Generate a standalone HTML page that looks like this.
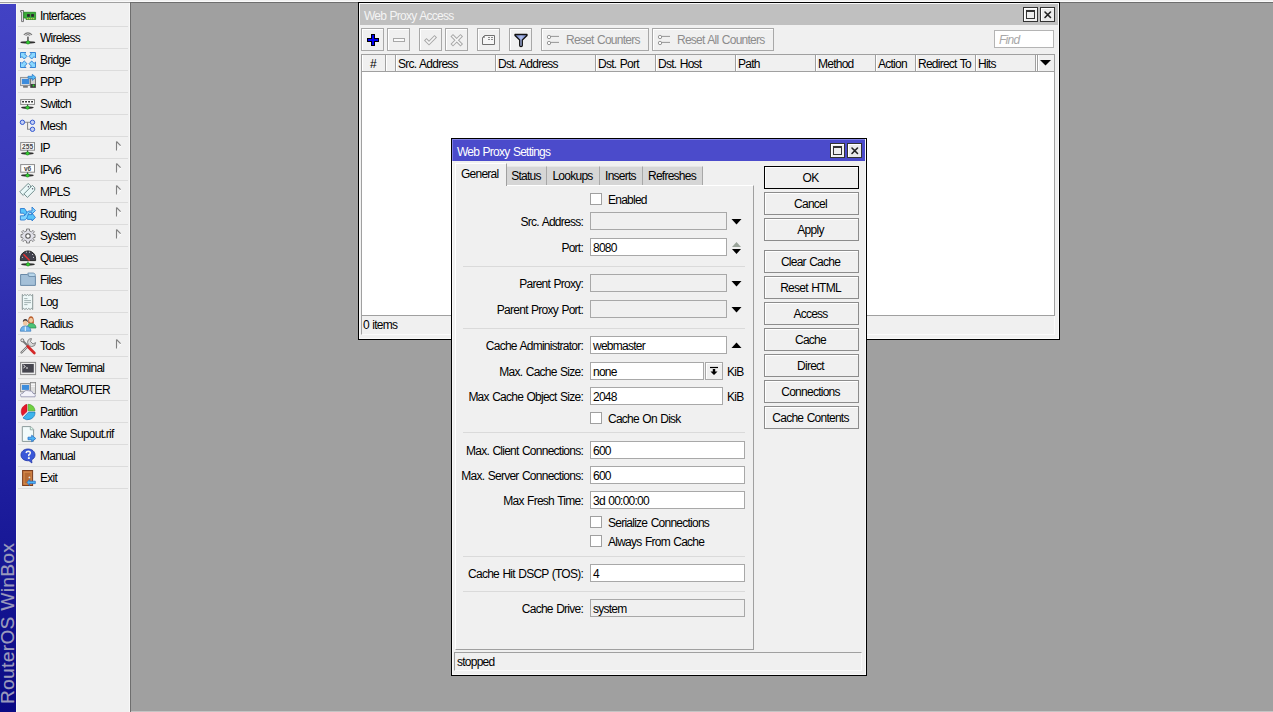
<!DOCTYPE html><html><head><meta charset="utf-8"><style>
*{margin:0;padding:0;box-sizing:border-box}
html,body{width:1273px;height:712px;overflow:hidden;background:#a0a0a0;position:relative;font-family:"Liberation Sans",sans-serif;font-size:12px;letter-spacing:-0.75px;word-spacing:0.8px;color:#000}
.b{position:absolute}
.t{position:absolute;white-space:nowrap;line-height:14px;height:14px}
.c{position:absolute;text-align:center;white-space:nowrap;line-height:14px;height:14px}
svg{position:absolute;overflow:visible}
</style></head><body><div class="b" style="left:0px;top:0px;width:1273px;height:2px;background:#f0f0f0"></div>
<div class="b" style="left:0px;top:1px;width:1273px;height:1px;background:#fafafa"></div>
<div class="b" style="left:0px;top:2px;width:130px;height:1px;background:#a0a0a0"></div>
<div class="b" style="left:130px;top:2px;width:1143px;height:1px;background:#6e6e6e"></div>
<div class="b" style="left:130px;top:2px;width:1px;height:710px;background:#6e6e6e"></div>
<div class="b" style="left:131px;top:711px;width:1142px;height:1px;background:#c4c4c4"></div>
<div class="b" style="left:0px;top:3px;width:130px;height:709px;background:#f0f0f0"></div>
<div class="b" style="left:129px;top:3px;width:1px;height:709px;background:#f8f8f8"></div>
<div class="b" style="left:0px;top:4px;width:16px;height:708px;background:linear-gradient(#4242c4,#3434b4 35%,#1c1c9c 70%,#0a0a84)"></div>
<div class="b" style="left:16px;top:4px;width:1px;height:708px;background:#f8f8f8"></div>
<div class="t" style="left:40px;top:9px;">Interfaces</div>
<div class="b" style="left:18px;top:26px;width:110px;height:1px;background:#dcdcdc"></div>
<div class="t" style="left:40px;top:31px;">Wireless</div>
<div class="b" style="left:18px;top:48px;width:110px;height:1px;background:#dcdcdc"></div>
<div class="t" style="left:40px;top:53px;">Bridge</div>
<div class="b" style="left:18px;top:70px;width:110px;height:1px;background:#dcdcdc"></div>
<div class="t" style="left:40px;top:75px;">PPP</div>
<div class="b" style="left:18px;top:92px;width:110px;height:1px;background:#dcdcdc"></div>
<div class="t" style="left:40px;top:97px;">Switch</div>
<div class="b" style="left:18px;top:114px;width:110px;height:1px;background:#dcdcdc"></div>
<div class="t" style="left:40px;top:119px;">Mesh</div>
<div class="b" style="left:18px;top:136px;width:110px;height:1px;background:#dcdcdc"></div>
<div class="t" style="left:40px;top:141px;">IP</div>
<div class="b" style="left:18px;top:158px;width:110px;height:1px;background:#dcdcdc"></div>
<svg style="left:116px;top:141px" width="7" height="11"><path d="M1 9.5 L5 5" fill="none" stroke="#ffffff" stroke-width="1"/><path d="M0.5 0.5 V9.5 M0.5 0.5 L4.6 4.6" fill="none" stroke="#808080" stroke-width="1.1"/></svg>
<div class="t" style="left:40px;top:163px;">IPv6</div>
<div class="b" style="left:18px;top:180px;width:110px;height:1px;background:#dcdcdc"></div>
<svg style="left:116px;top:163px" width="7" height="11"><path d="M1 9.5 L5 5" fill="none" stroke="#ffffff" stroke-width="1"/><path d="M0.5 0.5 V9.5 M0.5 0.5 L4.6 4.6" fill="none" stroke="#808080" stroke-width="1.1"/></svg>
<div class="t" style="left:40px;top:185px;">MPLS</div>
<div class="b" style="left:18px;top:202px;width:110px;height:1px;background:#dcdcdc"></div>
<svg style="left:116px;top:185px" width="7" height="11"><path d="M1 9.5 L5 5" fill="none" stroke="#ffffff" stroke-width="1"/><path d="M0.5 0.5 V9.5 M0.5 0.5 L4.6 4.6" fill="none" stroke="#808080" stroke-width="1.1"/></svg>
<div class="t" style="left:40px;top:207px;">Routing</div>
<div class="b" style="left:18px;top:224px;width:110px;height:1px;background:#dcdcdc"></div>
<svg style="left:116px;top:207px" width="7" height="11"><path d="M1 9.5 L5 5" fill="none" stroke="#ffffff" stroke-width="1"/><path d="M0.5 0.5 V9.5 M0.5 0.5 L4.6 4.6" fill="none" stroke="#808080" stroke-width="1.1"/></svg>
<div class="t" style="left:40px;top:229px;">System</div>
<div class="b" style="left:18px;top:246px;width:110px;height:1px;background:#dcdcdc"></div>
<svg style="left:116px;top:229px" width="7" height="11"><path d="M1 9.5 L5 5" fill="none" stroke="#ffffff" stroke-width="1"/><path d="M0.5 0.5 V9.5 M0.5 0.5 L4.6 4.6" fill="none" stroke="#808080" stroke-width="1.1"/></svg>
<div class="t" style="left:40px;top:251px;">Queues</div>
<div class="b" style="left:18px;top:268px;width:110px;height:1px;background:#dcdcdc"></div>
<div class="t" style="left:40px;top:273px;">Files</div>
<div class="b" style="left:18px;top:290px;width:110px;height:1px;background:#dcdcdc"></div>
<div class="t" style="left:40px;top:295px;">Log</div>
<div class="b" style="left:18px;top:312px;width:110px;height:1px;background:#dcdcdc"></div>
<div class="t" style="left:40px;top:317px;">Radius</div>
<div class="b" style="left:18px;top:334px;width:110px;height:1px;background:#dcdcdc"></div>
<div class="t" style="left:40px;top:339px;">Tools</div>
<div class="b" style="left:18px;top:356px;width:110px;height:1px;background:#dcdcdc"></div>
<svg style="left:116px;top:339px" width="7" height="11"><path d="M1 9.5 L5 5" fill="none" stroke="#ffffff" stroke-width="1"/><path d="M0.5 0.5 V9.5 M0.5 0.5 L4.6 4.6" fill="none" stroke="#808080" stroke-width="1.1"/></svg>
<div class="t" style="left:40px;top:361px;">New Terminal</div>
<div class="b" style="left:18px;top:378px;width:110px;height:1px;background:#dcdcdc"></div>
<div class="t" style="left:40px;top:383px;">MetaROUTER</div>
<div class="b" style="left:18px;top:400px;width:110px;height:1px;background:#dcdcdc"></div>
<div class="t" style="left:40px;top:405px;">Partition</div>
<div class="b" style="left:18px;top:422px;width:110px;height:1px;background:#dcdcdc"></div>
<div class="t" style="left:40px;top:427px;">Make Supout.rif</div>
<div class="b" style="left:18px;top:444px;width:110px;height:1px;background:#dcdcdc"></div>
<div class="t" style="left:40px;top:449px;">Manual</div>
<div class="b" style="left:18px;top:466px;width:110px;height:1px;background:#dcdcdc"></div>
<div class="t" style="left:40px;top:471px;">Exit</div>
<div class="b" style="left:18px;top:488px;width:110px;height:1px;background:#dcdcdc"></div>
<div class="b" style="left:-1.5px;top:703.5px;width:170px;height:17px;transform-origin:0 0;transform:rotate(-90deg);font-size:19px;letter-spacing:0.4px;word-spacing:0;line-height:17px;color:#9a9abc;text-shadow:0.4px 0 0 rgba(154,154,188,0.5);white-space:nowrap">RouterOS WinBox</div>
<svg style="left:20px;top:8px" width="16" height="16" viewBox="0 0 16 16"><path d="M0.6 2.5 H3.5 V13.6 H1.6 V4 H0.6 Z" fill="#e4e4ee" stroke="#6a6a6a" stroke-width="0.9"/><path d="M3.8 4.3 H15.6 V11.5 H6 V10 H3.8 Z" fill="#3cac3c" stroke="#218a21" stroke-width="0.8"/><rect x="7.1" y="6.1" width="2.7" height="2.7" fill="#2a2030"/><rect x="11.2" y="6.1" width="2.7" height="2.7" fill="#2a2030"/><path d="M6.8 10.6 H15" stroke="#e8c860" stroke-width="1.1" stroke-dasharray="1 1"/></svg>
<svg style="left:20px;top:30px" width="16" height="16" viewBox="0 0 16 16"><path d="M3.8 4.8 Q7.9 0.8 12 4.8" fill="none" stroke="#777" stroke-width="1.1"/><path d="M5.6 5.4 Q7.9 3.6 10.2 5.4" fill="none" stroke="#666" stroke-width="0.9"/><rect x="7.2" y="6.6" width="1.5" height="5" fill="#555"/><ellipse cx="7.8500000000000005" cy="12.4" rx="7.45" ry="1.1" fill="#1a1a1a" opacity="0.9"/><circle cx="8" cy="12.4" r="1.7" fill="#33cc33" stroke="#1a8a1a" stroke-width="0.6"/></svg>
<svg style="left:20px;top:52px" width="16" height="16" viewBox="0 0 16 16"><g><path d="M0.5 0.5 H6 L4.6 1.9 L7 4.3 L4.3 7 L1.9 4.6 L0.5 6 Z" fill="#8ad8ff" stroke="#2a7ad0" stroke-width="0.9"/></g><g transform="translate(16 0) scale(-1 1)"><path d="M0.5 0.5 H6 L4.6 1.9 L7 4.3 L4.3 7 L1.9 4.6 L0.5 6 Z" fill="#8ad8ff" stroke="#2a7ad0" stroke-width="0.9"/></g><g transform="translate(0 16) scale(1 -1)"><path d="M0.5 0.5 H6 L4.6 1.9 L7 4.3 L4.3 7 L1.9 4.6 L0.5 6 Z" fill="#8ad8ff" stroke="#2a7ad0" stroke-width="0.9"/></g><g transform="translate(16 16) scale(-1 -1)"><path d="M0.5 0.5 H6 L4.6 1.9 L7 4.3 L4.3 7 L1.9 4.6 L0.5 6 Z" fill="#8ad8ff" stroke="#2a7ad0" stroke-width="0.9"/></g></svg>
<svg style="left:20px;top:74px" width="16" height="16" viewBox="0 0 16 16"><rect x="0.6" y="3.4" width="9.4" height="8.2" fill="#e0e0e0" stroke="#8a8a8a" stroke-width="0.9"/><rect x="1.9" y="4.9" width="7.3" height="5.2" fill="#3c8cdc"/><rect x="3.1" y="11.8" width="4.7" height="1.9" fill="#777"/><rect x="10.6" y="4.7" width="5" height="8.8" fill="#d0d0d0" stroke="#666" stroke-width="0.8"/><rect x="10.6" y="10" width="5" height="3.6" fill="#404040"/><circle cx="13.5" cy="11.5" r="0.9" fill="#2d2"/><path d="M8 2.3 H12.3 V0.3 L15.8 3.3 L12.3 6.3 V4.3 H8 Z" fill="#5ac0f8" stroke="#2a78c8" stroke-width="0.8"/></svg>
<svg style="left:20px;top:96px" width="16" height="16" viewBox="0 0 16 16"><rect x="0.7" y="3.6" width="13.8" height="4.8" fill="#fff" stroke="#8a8a8a" stroke-width="1"/><path d="M2.1 5.7 H13.5" stroke="#333" stroke-width="1.4" stroke-dasharray="1.9 1.1"/><rect x="7.1" y="8.5" width="1" height="2" fill="#333"/><ellipse cx="7.3999999999999995" cy="11.6" rx="6.3" ry="1.1" fill="#1a1a1a" opacity="0.9"/><circle cx="7.55" cy="11.6" r="1.7" fill="#33cc33" stroke="#1a8a1a" stroke-width="0.6"/></svg>
<svg style="left:20px;top:118px" width="16" height="16" viewBox="0 0 16 16"><path d="M4.5 4.3 H10.5 M7.55 4.3 V11.3 H10.5" fill="none" stroke="#8a8a8a" stroke-width="1.1"/><circle cx="2.4" cy="4.3" r="2.2" fill="#c4d0f4" stroke="#3358d0" stroke-width="1"/><circle cx="12.5" cy="4.3" r="2.2" fill="#c4d0f4" stroke="#3358d0" stroke-width="1"/><circle cx="12.5" cy="11.3" r="2.2" fill="#c4d0f4" stroke="#3358d0" stroke-width="1"/></svg>
<svg style="left:20px;top:140px" width="16" height="16" viewBox="0 0 16 16"><rect x="0.7" y="2.6" width="13.8" height="7.6" fill="#fff" stroke="#8a8a8a" stroke-width="1"/><text x="7.6" y="8.8" font-family="Liberation Sans" font-size="6.6" font-weight="bold" text-anchor="middle" fill="#4a4a4a" letter-spacing="0">255</text><rect x="7.1" y="10.4" width="1" height="2" fill="#333"/><ellipse cx="7.3999999999999995" cy="13.4" rx="6.3" ry="1.1" fill="#1a1a1a" opacity="0.9"/><circle cx="7.55" cy="13.4" r="1.7" fill="#33cc33" stroke="#1a8a1a" stroke-width="0.6"/></svg>
<svg style="left:20px;top:162px" width="16" height="16" viewBox="0 0 16 16"><rect x="0.7" y="2.6" width="13.8" height="7.6" fill="#fff" stroke="#8a8a8a" stroke-width="1"/><text x="7.6" y="8.8" font-family="Liberation Sans" font-size="6.6" font-weight="bold" text-anchor="middle" fill="#4a4a4a" letter-spacing="0">v6</text><rect x="7.1" y="10.4" width="1" height="2" fill="#333"/><ellipse cx="7.3999999999999995" cy="13.4" rx="6.3" ry="1.1" fill="#1a1a1a" opacity="0.9"/><circle cx="7.55" cy="13.4" r="1.7" fill="#33cc33" stroke="#1a8a1a" stroke-width="0.6"/></svg>
<svg style="left:20px;top:184px" width="16" height="16" viewBox="0 0 16 16"><g transform="translate(8.2 -0.6) rotate(45)"><path d="M0 0 H3.4 L5 1.8 V12 H0 Z" fill="#eaf8f8" stroke="#6f8a8a" stroke-width="0.9"/><circle cx="2.4" cy="2.2" r="0.7" fill="#556"/></g><g transform="translate(12.4 1.4) rotate(45)"><path d="M0 0 H3.4 L5 1.8 V12 H0 Z" fill="#eaf8f8" stroke="#6f8a8a" stroke-width="0.9"/><circle cx="2.4" cy="2.2" r="0.7" fill="#556"/></g></svg>
<svg style="left:20px;top:206px" width="16" height="16" viewBox="0 0 16 16"><path d="M0.4 2.5 H4.5 L8.5 8.6 H12 V7 L15.4 11.5 L12 15 V13.4 H7.5 L3.5 7.2 H0.4 Z" fill="#58c4fa" stroke="#2a7ad0" stroke-width="0.9"/><path d="M0.4 9.8 H4 C6 9.8 6.5 5 9 5 H12 V1 L15.4 4.5 L12 8 V6.7 H9.5 C8 6.7 7.6 14 4.2 14 H0.4 Z" fill="#80d4ff" stroke="#2a7ad0" stroke-width="0.9"/></svg>
<svg style="left:20px;top:228px" width="16" height="16" viewBox="0 0 16 16"><g transform="translate(8 8)"><path d="M-1.5 -7 H1.5 V-5 L3.5 -4.2 L5 -5.6 L6.4 -4.2 L5 -2.6 L5.6 -1.5 H7 V1.5 H5.6 L5 2.6 L6.4 4.2 L5 5.6 L3.5 4.2 L1.5 5 V7 H-1.5 V5 L-3.5 4.2 L-5 5.6 L-6.4 4.2 L-5 2.6 L-5.6 1.5 H-7 V-1.5 H-5.6 L-5 -2.6 L-6.4 -4.2 L-5 -5.6 L-3.5 -4.2 L-1.5 -5 Z" fill="#e0e0e8" stroke="#777" stroke-width="0.9"/><circle r="2.2" fill="#fff" stroke="#555" stroke-width="1.1"/></g></svg>
<svg style="left:20px;top:250px" width="16" height="16" viewBox="0 0 16 16"><path d="M0.4 10.6 V8.5 A7.5 7.5 0 0 1 15.6 8.5 V10.6 Z" fill="#40404c" stroke="#1c1c1c" stroke-width="0.9"/><g fill="#cfcfd8"><rect x="5.9" y="1.7" width="1" height="1"/><rect x="9" y="1.7" width="1" height="1"/><rect x="12.1" y="4" width="1" height="1"/><rect x="13" y="6.9" width="1" height="1"/><rect x="1.9" y="6.9" width="1" height="1"/></g><path d="M3.5 4.3 L9.6 10.6" stroke="#e83030" stroke-width="1.5"/><rect x="7.3" y="10.8" width="1.3" height="2.4" fill="#999"/><ellipse cx="8.0" cy="14.4" rx="6.800000000000001" ry="1.1" fill="#1a1a1a" opacity="0.9"/><circle cx="8" cy="14.4" r="1.7" fill="#33cc33" stroke="#1a8a1a" stroke-width="0.6"/></svg>
<svg style="left:20px;top:272px" width="16" height="16" viewBox="0 0 16 16"><path d="M0.6 2.5 H7.6 L8.8 4.3 H15.4 V13.4 H0.6 Z" fill="#a4c0d8" stroke="#6a8aa8" stroke-width="1"/><path d="M7.8 1 H13.8 L15.2 2.4 V4.5 H9 Z" fill="#b8d6ea" stroke="#6a8aa8" stroke-width="0.8"/></svg>
<svg style="left:20px;top:294px" width="16" height="16" viewBox="0 0 16 16"><path d="M2.3 0.5 L3.6 1.6 L4.9 0.5 L6.2 1.6 L7.5 0.5 L8.8 1.6 L10.1 0.5 L11.4 1.6 L12.7 0.5 V15.5 L11.4 14.4 L10.1 15.5 L8.8 14.4 L7.5 15.5 L6.2 14.4 L4.9 15.5 L3.6 14.4 L2.3 15.5 Z" fill="#eef8f8" stroke="#7a8a8a" stroke-width="0.9"/><path d="M4.2 4.6 H7.5 M4.2 6.6 H11 M4.2 8.6 H11 M4.2 10.6 H7.5" stroke="#98aaaa" stroke-width="0.9"/></svg>
<svg style="left:20px;top:316px" width="16" height="16" viewBox="0 0 16 16"><path d="M8.2 7.5 Q7.8 0 11 0.2 Q14.2 0 13.9 7.5 Z" fill="#b85a28"/><ellipse cx="11" cy="4.3" rx="2" ry="2.5" fill="#f2c8a0"/><path d="M7.3 12 Q7.6 7.4 11 7.4 Q15.8 7.4 16 12 Z" fill="#4cc478" stroke="#2a8a4a" stroke-width="0.7"/><path d="M2.8 6 Q3 3 5.3 3 Q7.8 3 7.8 6 Z" fill="#3a3030"/><ellipse cx="5.3" cy="7.2" rx="2.3" ry="2.6" fill="#f2c8a0"/><path d="M0.3 15.2 Q0.6 10 5.3 10 Q10.6 10 10.9 15.2 Z" fill="#70b4ec" stroke="#3a78b8" stroke-width="0.7"/><path d="M5.3 10.5 V15" stroke="#fff" stroke-width="0.9"/></svg>
<svg style="left:20px;top:338px" width="16" height="16" viewBox="0 0 16 16"><path d="M2.2 2.2 L8 8" stroke="#7a7a7a" stroke-width="2"/><circle cx="2.3" cy="2.3" r="1.5" fill="#e8e8e8" stroke="#6a6a6a" stroke-width="0.9"/><path d="M1.5 14.5 L9.5 6.5" stroke="#7a7a7a" stroke-width="2.3" stroke-linecap="round"/><path d="M1.5 14.5 L9.5 6.5" stroke="#ddd" stroke-width="0.8"/><path d="M11.5 0.6 A4 4 0 1 0 15.6 4.6 L13 6 L10.5 3.5 Z" fill="#d8d8d8" stroke="#7a7a7a" stroke-width="0.9"/><path d="M7.8 8.6 L14.3 15" stroke="#d42828" stroke-width="2.8" stroke-linecap="round"/></svg>
<svg style="left:20px;top:360px" width="16" height="16" viewBox="0 0 16 16"><rect x="0.6" y="2.4" width="15" height="12.2" fill="#ececec" stroke="#8a8a8a" stroke-width="1"/><rect x="2.2" y="4" width="11.6" height="8.6" fill="#46464f"/><path d="M3.4 5 L5.4 6.5 L3.4 8 M6 8 H8" fill="none" stroke="#e4e4e4" stroke-width="1"/></svg>
<svg style="left:20px;top:382px" width="16" height="16" viewBox="0 0 16 16"><rect x="0.6" y="1.6" width="9.5" height="8.2" fill="#e4e4e4" stroke="#8a8a8a" stroke-width="0.9"/><rect x="1.9" y="2.9" width="7.1" height="5" fill="#3c8cdc"/><rect x="10.4" y="0.4" width="5.2" height="11" fill="#dedede" stroke="#888" stroke-width="0.8"/><path d="M11 2.5 H15 M11 4.3 H15" stroke="#fff" stroke-width="0.8"/><path d="M1 14.8 Q-0.5 11 3 11.2 Q4.5 7.6 8.8 8.8 Q12.5 8.2 13 11.3 Q16.2 11.8 15 14.8 Z" fill="#f2f2fa" stroke="#8a8aa8" stroke-width="0.8"/></svg>
<svg style="left:20px;top:404px" width="16" height="16" viewBox="0 0 16 16"><path d="M7 0.3 V7.5 L2.5 11.8 A7.5 7.5 0 0 1 7 0.3 Z" fill="#e4192a" stroke="#b01020" stroke-width="0.5"/><path d="M8.2 0.3 A6.8 6.8 0 0 1 15 6.8 H8.2 Z" fill="#70d040" stroke="#3c9a20" stroke-width="0.6"/><path d="M15 8.1 A7.3 7.3 0 0 1 3 14 L8.6 8.1 Z" fill="#3cb4ec" stroke="#1a70b8" stroke-width="0.7"/></svg>
<svg style="left:20px;top:426px" width="16" height="16" viewBox="0 0 16 16"><path d="M2.3 0.6 H10.8 L13.6 3.4 V15.4 H2.3 Z" fill="#f2fbfb" stroke="#8a9a9a" stroke-width="1"/><path d="M10.3 0.6 V3.8 H13.6" fill="#dfe" stroke="#8a9a9a" stroke-width="0.8"/><path d="M8 11.2 H11.7 V9.2 L15.8 12.5 L11.7 15.7 V13.7 H8 Z" fill="#4cb4f4" stroke="#2a70c8" stroke-width="0.8"/></svg>
<svg style="left:20px;top:448px" width="16" height="16" viewBox="0 0 16 16"><path d="M8 1 C12 1 15 3.5 15 6.9 C15 9.2 13.6 10.8 11.6 11.8 L11.9 15 L9 12.7 C4.2 13.1 1 10.4 1 6.9 C1 3.5 4 1 8 1 Z" fill="#3a58d8" stroke="#2034a8" stroke-width="0.8"/><path d="M6.1 5 Q6.4 3.2 8.3 3.2 Q10.3 3.3 10.3 5 Q10.1 6.3 8.8 6.9 V8.2" fill="none" stroke="#f4f4ee" stroke-width="1.6"/><rect x="7.9" y="9.2" width="1.9" height="1.8" fill="#f4f4ee"/></svg>
<svg style="left:20px;top:470px" width="16" height="16" viewBox="0 0 16 16"><rect x="2.6" y="0.5" width="10" height="15" fill="#c87840" stroke="#7a3e1e" stroke-width="1"/><rect x="4.2" y="2.3" width="6.8" height="11.5" fill="#b66a34" stroke="#d8904e" stroke-width="0.6"/><circle cx="9.4" cy="7.4" r="0.9" fill="#e0e0e0"/><path d="M9.5 9.6 V11.2 H15.3 V13.6 H9.5 V15.4 L7 12.4 Z" fill="#4cb4f4" stroke="#2a70c8" stroke-width="0.8"/></svg>
<div class="b" style="left:358px;top:2px;width:702px;height:338px;background:#f0f0f0;border:1px solid #000"></div>
<div class="b" style="left:359px;top:3px;width:700px;height:336px;border:1px solid #f8f8f8;border-right-color:#fafafa;border-bottom-color:#fafafa"></div>
<div class="b" style="left:360px;top:4px;width:698px;height:21px;background:#c0c0c0"></div>
<div class="t" style="left:364px;top:9px;color:#f4f4f4;">Web Proxy Access</div>
<div class="b" style="left:1023px;top:7px;width:15px;height:15px;background:#f0f0f0;border:1px solid #333;box-shadow:inset 1px 1px 0 #fff"></div>
<div class="b" style="left:1026px;top:10px;width:9px;height:9px;border:1px solid #333;border-top-width:2px;background:#eee"></div>
<div class="b" style="left:1040px;top:7px;width:15px;height:15px;background:#ebebeb;border:1px solid #333;box-shadow:inset 1px 1px 0 #fff"></div>
<svg style="left:1044px;top:11px" width="8" height="8"><path d="M1 1 L6.5 6.5 M6.5 1 L1 6.5" stroke="#222" stroke-width="1.6" stroke-linecap="round"/></svg>
<div class="b" style="left:361px;top:28px;width:23px;height:23px;background:#f0f0f0;border:1px solid #a8a8a8;box-shadow:inset 1px 1px 0 #fff"></div>
<div class="b" style="left:387px;top:28px;width:23px;height:23px;background:#f0f0f0;border:1px solid #a8a8a8;box-shadow:inset 1px 1px 0 #fff"></div>
<div class="b" style="left:419px;top:28px;width:23px;height:23px;background:#f0f0f0;border:1px solid #a8a8a8;box-shadow:inset 1px 1px 0 #fff"></div>
<div class="b" style="left:445px;top:28px;width:23px;height:23px;background:#f0f0f0;border:1px solid #a8a8a8;box-shadow:inset 1px 1px 0 #fff"></div>
<div class="b" style="left:477px;top:28px;width:23px;height:23px;background:#f0f0f0;border:1px solid #a8a8a8;box-shadow:inset 1px 1px 0 #fff"></div>
<div class="b" style="left:509px;top:28px;width:23px;height:23px;background:#f0f0f0;border:1px solid #a8a8a8;box-shadow:inset 1px 1px 0 #fff"></div>
<svg style="left:367px;top:34px" width="12" height="12"><path d="M4 0 H8 V4 H12 V8 H8 V12 H4 V8 H0 V4 H4 Z" fill="#000"/><path d="M5 1 H7 V5 H11 V7 H7 V11 H5 V7 H1 V5 H5 Z" fill="#0000f4"/></svg>
<svg style="left:393px;top:38px" width="12" height="4"><rect x="0.5" y="0.5" width="11" height="3" fill="#fafafa" stroke="#a8a8a8"/></svg>
<svg style="left:423px;top:33px" width="16" height="15"><path d="M3.5 7.5 L6 10 L11.5 4.5" fill="none" stroke="#a8a8a8" stroke-width="3.6" stroke-linecap="square"/><path d="M3.5 7.5 L6 10 L11.5 4.5" fill="none" stroke="#f6f6f6" stroke-width="1.6" stroke-linecap="square"/></svg>
<svg style="left:449px;top:33px" width="16" height="15"><path d="M4 3.5 L11.5 11 M11.5 3.5 L4 11" fill="none" stroke="#a8a8a8" stroke-width="3.6" stroke-linecap="square"/><path d="M4 3.5 L11.5 11 M11.5 3.5 L4 11" fill="none" stroke="#f6f6f6" stroke-width="1.6" stroke-linecap="square"/></svg>
<svg style="left:481px;top:34px" width="16" height="12"><path d="M1.5 3.5 L3.5 1.5 H13.5 V10.5 H1.5 Z" fill="#f6f6f6" stroke="#707070"/><path d="M2 3.5 H3.5 V2" fill="none" stroke="#909090"/><path d="M7 3.5 H12 M7 5.5 H12" stroke="#8a8a8a" stroke-dasharray="2 1"/></svg>
<svg style="left:514px;top:33px" width="15" height="15"><defs><linearGradient id="fg" x1="0" x2="1"><stop offset="0" stop-color="#5868b0"/><stop offset="0.5" stop-color="#b0c0f0"/><stop offset="1" stop-color="#6878c0"/></linearGradient></defs><path d="M1 1.5 H13 V2.5 L8.3 7 V12.5 Q8.3 13.6 7 13.6 Q5.7 13.6 5.7 12.5 V7 L1 2.5 Z" fill="url(#fg)" stroke="#111" stroke-width="1.3" stroke-linejoin="round"/></svg>
<div class="b" style="left:541px;top:28px;width:108px;height:23px;background:#f0f0f0;border:1px solid #a8a8a8;box-shadow:inset 1px 1px 0 #fff"></div>
<div class="b" style="left:652px;top:28px;width:122px;height:23px;background:#f0f0f0;border:1px solid #a8a8a8;box-shadow:inset 1px 1px 0 #fff"></div>
<svg style="left:546px;top:33px" width="16" height="13"><circle cx="3" cy="4" r="1.7" fill="#fafafa" stroke="#8c8c8c" stroke-width="0.9"/><circle cx="3" cy="10" r="1.7" fill="#fafafa" stroke="#8c8c8c" stroke-width="0.9"/><path d="M4.5 3.4 H13 M4.5 9.4 H13" stroke="#8c8c8c" stroke-width="0.9"/></svg>
<svg style="left:657px;top:33px" width="16" height="13"><circle cx="3" cy="4" r="1.7" fill="#fafafa" stroke="#8c8c8c" stroke-width="0.9"/><circle cx="3" cy="10" r="1.7" fill="#fafafa" stroke="#8c8c8c" stroke-width="0.9"/><path d="M4.5 3.4 H13 M4.5 9.4 H13" stroke="#8c8c8c" stroke-width="0.9"/></svg>
<div class="t" style="left:566px;top:33px;color:#8c8c8c;">Reset Counters</div>
<div class="t" style="left:677px;top:33px;color:#8c8c8c;">Reset All Counters</div>
<div class="b" style="left:994px;top:30px;width:60px;height:18px;background:#fff;border:1px solid #b4b4b4"></div>
<div class="t" style="left:999px;top:33px;color:#a8a8a8;font-style:italic">Find</div>
<div class="b" style="left:361px;top:54px;width:694px;height:262px;background:#fff;border:1px solid #a0a0a0"></div>
<div class="b" style="left:362px;top:55px;width:692px;height:17px;background:#f0f0f0;border-bottom:1px solid #a0a0a0"></div>
<div class="b" style="left:362px;top:55px;width:1px;height:16px;background:#fff"></div>
<div class="t" style="left:370px;top:57px;">#</div>
<div class="b" style="left:385px;top:55px;width:1px;height:16px;background:#a0a0a0"></div>
<div class="b" style="left:386px;top:55px;width:1px;height:16px;background:#fff"></div>
<div class="b" style="left:395px;top:55px;width:1px;height:16px;background:#a0a0a0"></div>
<div class="b" style="left:396px;top:55px;width:1px;height:16px;background:#fff"></div>
<div class="t" style="left:398px;top:57px;">Src. Address</div>
<div class="b" style="left:495px;top:55px;width:1px;height:16px;background:#a0a0a0"></div>
<div class="b" style="left:496px;top:55px;width:1px;height:16px;background:#fff"></div>
<div class="t" style="left:498px;top:57px;">Dst. Address</div>
<div class="b" style="left:595px;top:55px;width:1px;height:16px;background:#a0a0a0"></div>
<div class="b" style="left:596px;top:55px;width:1px;height:16px;background:#fff"></div>
<div class="t" style="left:598px;top:57px;">Dst. Port</div>
<div class="b" style="left:655px;top:55px;width:1px;height:16px;background:#a0a0a0"></div>
<div class="b" style="left:656px;top:55px;width:1px;height:16px;background:#fff"></div>
<div class="t" style="left:658px;top:57px;">Dst. Host</div>
<div class="b" style="left:735px;top:55px;width:1px;height:16px;background:#a0a0a0"></div>
<div class="b" style="left:736px;top:55px;width:1px;height:16px;background:#fff"></div>
<div class="t" style="left:738px;top:57px;">Path</div>
<div class="b" style="left:815px;top:55px;width:1px;height:16px;background:#a0a0a0"></div>
<div class="b" style="left:816px;top:55px;width:1px;height:16px;background:#fff"></div>
<div class="t" style="left:818px;top:57px;">Method</div>
<div class="b" style="left:875px;top:55px;width:1px;height:16px;background:#a0a0a0"></div>
<div class="b" style="left:876px;top:55px;width:1px;height:16px;background:#fff"></div>
<div class="t" style="left:878px;top:57px;">Action</div>
<div class="b" style="left:915px;top:55px;width:1px;height:16px;background:#a0a0a0"></div>
<div class="b" style="left:916px;top:55px;width:1px;height:16px;background:#fff"></div>
<div class="t" style="left:918px;top:57px;">Redirect To</div>
<div class="b" style="left:975px;top:55px;width:1px;height:16px;background:#a0a0a0"></div>
<div class="b" style="left:976px;top:55px;width:1px;height:16px;background:#fff"></div>
<div class="t" style="left:978px;top:57px;">Hits</div>
<div class="b" style="left:1035px;top:55px;width:1px;height:16px;background:#a0a0a0"></div>
<div class="b" style="left:1036px;top:55px;width:1px;height:16px;background:#fff"></div>
<div class="b" style="left:1037px;top:55px;width:1px;height:16px;background:#a0a0a0"></div>
<div class="b" style="left:1038px;top:55px;width:1px;height:16px;background:#fff"></div>
<svg style="left:1040px;top:59px" width="12" height="8"><path d="M0 1 H11 L5.5 6.5 Z" fill="#000"/></svg>
<div class="b" style="left:361px;top:316px;width:694px;height:19px;border-left:1px solid #a0a0a0;border-right:1px solid #fafafa;border-bottom:1px solid #fafafa"></div>
<div class="t" style="left:363px;top:318px;">0 items</div>
<div class="b" style="left:451px;top:138px;width:416px;height:538px;background:#f0f0f0;border:1px solid #000"></div>
<div class="b" style="left:452px;top:139px;width:414px;height:536px;border:1px solid #fafafa"></div>
<div class="b" style="left:452px;top:139px;width:413px;height:22px;background:#4b4bcb;border-top:1px solid #8282e6;border-left:1px solid #8282e6"></div>
<div class="t" style="left:457px;top:145px;color:#ffffff;">Web Proxy Settings</div>
<div class="b" style="left:830px;top:143px;width:15px;height:15px;background:#f0f0f0;border:1px solid #333;box-shadow:inset 1px 1px 0 #fff"></div>
<div class="b" style="left:833px;top:146px;width:9px;height:9px;border:1px solid #333;border-top-width:2px;background:#eee"></div>
<div class="b" style="left:847px;top:143px;width:15px;height:15px;background:#ebebeb;border:1px solid #333;box-shadow:inset 1px 1px 0 #fff"></div>
<svg style="left:851px;top:147px" width="8" height="8"><path d="M1 1 L6.5 6.5 M6.5 1 L1 6.5" stroke="#222" stroke-width="1.6" stroke-linecap="round"/></svg>
<div class="b" style="left:455px;top:185px;width:299px;height:465px;border-top:1px solid #fff;border-left:1px solid #fff;border-right:1px solid #a0a0a0;border-bottom:1px solid #a0a0a0"></div>
<div class="b" style="left:507px;top:166px;width:40px;height:19px;background:#d6d6d6;border-right:1px solid #a8a8a8;border-top:1px solid #e6e6e6"></div>
<div class="c" style="left:506px;width:40px;top:169px">Status</div>
<div class="b" style="left:547px;top:166px;width:53px;height:19px;background:#d6d6d6;border-right:1px solid #a8a8a8;border-top:1px solid #e6e6e6"></div>
<div class="c" style="left:546px;width:53px;top:169px">Lookups</div>
<div class="b" style="left:600px;top:166px;width:43px;height:19px;background:#d6d6d6;border-right:1px solid #a8a8a8;border-top:1px solid #e6e6e6"></div>
<div class="c" style="left:599px;width:43px;top:169px">Inserts</div>
<div class="b" style="left:643px;top:166px;width:60px;height:19px;background:#d6d6d6;border-right:1px solid #a8a8a8;border-top:1px solid #e6e6e6"></div>
<div class="c" style="left:642px;width:60px;top:169px">Refreshes</div>
<div class="b" style="left:455px;top:163px;width:52px;height:23px;background:#f0f0f0;border-left:1px solid #fff;border-top:1px solid #fff;border-right:1px solid #a0a0a0"></div>
<div class="t" style="left:461px;top:167px;">General</div>
<div class="b" style="left:590px;top:193px;width:12px;height:12px;background:#fff;border:1px solid #a0a0a0"></div>
<div class="t" style="left:608px;top:193px;">Enabled</div>
<div class="t" style="right:690px;top:215px;">Src. Address:</div>
<div class="b" style="left:590px;top:212px;width:137px;height:18px;background:#f0f0f0;border:1px solid #a8a8a8"></div>
<svg style="left:731px;top:219px" width="11" height="6"><path d="M0.5 0 H10.5 L5.5 5.5 Z" fill="#000"/></svg>
<div class="t" style="right:690px;top:241px;">Port:</div>
<div class="b" style="left:590px;top:238px;width:137px;height:18px;background:#fff;border:1px solid #a8a8a8"></div>
<div class="t" style="left:593px;top:241px;">8080</div>
<svg style="left:731px;top:241px" width="11" height="14"><path d="M1 6 H10 L5.5 1 Z" fill="#9aa49a"/><path d="M1 8 H10 L5.5 13 Z" fill="#000"/></svg>
<div class="b" style="left:463px;top:266px;width:282px;height:1px;background:#dadada"></div>
<div class="t" style="right:690px;top:277px;">Parent Proxy:</div>
<div class="b" style="left:590px;top:274px;width:137px;height:18px;background:#f0f0f0;border:1px solid #a8a8a8"></div>
<svg style="left:731px;top:281px" width="11" height="6"><path d="M0.5 0 H10.5 L5.5 5.5 Z" fill="#000"/></svg>
<div class="t" style="right:690px;top:303px;">Parent Proxy Port:</div>
<div class="b" style="left:590px;top:300px;width:137px;height:18px;background:#f0f0f0;border:1px solid #a8a8a8"></div>
<svg style="left:731px;top:307px" width="11" height="6"><path d="M0.5 0 H10.5 L5.5 5.5 Z" fill="#000"/></svg>
<div class="b" style="left:463px;top:328px;width:282px;height:1px;background:#dadada"></div>
<div class="t" style="right:690px;top:339px;">Cache Administrator:</div>
<div class="b" style="left:590px;top:336px;width:137px;height:18px;background:#fff;border:1px solid #a8a8a8"></div>
<div class="t" style="left:593px;top:339px;">webmaster</div>
<svg style="left:731px;top:342px" width="11" height="6"><path d="M0.5 6 H10.5 L5.5 0.5 Z" fill="#000"/></svg>
<div class="t" style="right:690px;top:365px;">Max. Cache Size:</div>
<div class="b" style="left:590px;top:362px;width:114px;height:18px;background:#fff;border:1px solid #a8a8a8"></div>
<div class="t" style="left:593px;top:365px;">none</div>
<div class="b" style="left:705px;top:362px;width:18px;height:18px;background:#f0f0f0;border:1px solid #a8a8a8;box-shadow:inset 1px 1px 0 #fff"></div>
<svg style="left:709px;top:366px" width="10" height="10"><path d="M1 1.5 H9" stroke="#000" stroke-width="1.2"/><path d="M3.8 3 H6.2 V5.5 H8.5 L5 9 L1.5 5.5 H3.8 Z" fill="#000"/></svg>
<div class="t" style="left:727px;top:365px;">KiB</div>
<div class="t" style="right:690px;top:390px;">Max Cache Object Size:</div>
<div class="b" style="left:590px;top:387px;width:133px;height:18px;background:#fff;border:1px solid #a8a8a8"></div>
<div class="t" style="left:593px;top:390px;">2048</div>
<div class="t" style="left:727px;top:390px;">KiB</div>
<div class="b" style="left:590px;top:412px;width:12px;height:12px;background:#fff;border:1px solid #a0a0a0"></div>
<div class="t" style="left:608px;top:412px;">Cache On Disk</div>
<div class="b" style="left:463px;top:432px;width:282px;height:1px;background:#dadada"></div>
<div class="t" style="right:690px;top:444px;">Max. Client Connections:</div>
<div class="b" style="left:590px;top:441px;width:155px;height:18px;background:#fff;border:1px solid #a8a8a8"></div>
<div class="t" style="left:593px;top:444px;">600</div>
<div class="t" style="right:690px;top:469px;">Max. Server Connections:</div>
<div class="b" style="left:590px;top:466px;width:155px;height:18px;background:#fff;border:1px solid #a8a8a8"></div>
<div class="t" style="left:593px;top:469px;">600</div>
<div class="t" style="right:690px;top:494px;">Max Fresh Time:</div>
<div class="b" style="left:590px;top:491px;width:155px;height:18px;background:#fff;border:1px solid #a8a8a8"></div>
<div class="t" style="left:593px;top:494px;">3d 00:00:00</div>
<div class="b" style="left:590px;top:516px;width:12px;height:12px;background:#fff;border:1px solid #a0a0a0"></div>
<div class="t" style="left:608px;top:516px;">Serialize Connections</div>
<div class="b" style="left:590px;top:535px;width:12px;height:12px;background:#fff;border:1px solid #a0a0a0"></div>
<div class="t" style="left:608px;top:535px;">Always From Cache</div>
<div class="b" style="left:463px;top:556px;width:282px;height:1px;background:#dadada"></div>
<div class="t" style="right:690px;top:567px;">Cache Hit DSCP (TOS):</div>
<div class="b" style="left:590px;top:564px;width:155px;height:18px;background:#fff;border:1px solid #a8a8a8"></div>
<div class="t" style="left:593px;top:567px;">4</div>
<div class="b" style="left:463px;top:591px;width:282px;height:1px;background:#dadada"></div>
<div class="t" style="right:690px;top:602px;">Cache Drive:</div>
<div class="b" style="left:590px;top:599px;width:155px;height:18px;background:#f0f0f0;border:1px solid #a8a8a8"></div>
<div class="t" style="left:593px;top:602px;">system</div>
<div class="b" style="left:764px;top:166px;width:95px;height:23px;background:#f0f0f0;border:1px solid #000;box-shadow:inset 1px 1px 0 #fff"></div>
<div class="c" style="left:763px;width:95px;top:171px">OK</div>
<div class="b" style="left:764px;top:192px;width:95px;height:23px;background:#f0f0f0;border:1px solid #8c8c8c;box-shadow:inset 1px 1px 0 #fff"></div>
<div class="c" style="left:763px;width:95px;top:197px">Cancel</div>
<div class="b" style="left:764px;top:218px;width:95px;height:23px;background:#f0f0f0;border:1px solid #8c8c8c;box-shadow:inset 1px 1px 0 #fff"></div>
<div class="c" style="left:763px;width:95px;top:223px">Apply</div>
<div class="b" style="left:764px;top:250px;width:95px;height:23px;background:#f0f0f0;border:1px solid #8c8c8c;box-shadow:inset 1px 1px 0 #fff"></div>
<div class="c" style="left:763px;width:95px;top:255px">Clear Cache</div>
<div class="b" style="left:764px;top:276px;width:95px;height:23px;background:#f0f0f0;border:1px solid #8c8c8c;box-shadow:inset 1px 1px 0 #fff"></div>
<div class="c" style="left:763px;width:95px;top:281px">Reset HTML</div>
<div class="b" style="left:764px;top:302px;width:95px;height:23px;background:#f0f0f0;border:1px solid #8c8c8c;box-shadow:inset 1px 1px 0 #fff"></div>
<div class="c" style="left:763px;width:95px;top:307px">Access</div>
<div class="b" style="left:764px;top:328px;width:95px;height:23px;background:#f0f0f0;border:1px solid #8c8c8c;box-shadow:inset 1px 1px 0 #fff"></div>
<div class="c" style="left:763px;width:95px;top:333px">Cache</div>
<div class="b" style="left:764px;top:354px;width:95px;height:23px;background:#f0f0f0;border:1px solid #8c8c8c;box-shadow:inset 1px 1px 0 #fff"></div>
<div class="c" style="left:763px;width:95px;top:359px">Direct</div>
<div class="b" style="left:764px;top:380px;width:95px;height:23px;background:#f0f0f0;border:1px solid #8c8c8c;box-shadow:inset 1px 1px 0 #fff"></div>
<div class="c" style="left:763px;width:95px;top:385px">Connections</div>
<div class="b" style="left:764px;top:406px;width:95px;height:23px;background:#f0f0f0;border:1px solid #8c8c8c;box-shadow:inset 1px 1px 0 #fff"></div>
<div class="c" style="left:763px;width:95px;top:411px">Cache Contents</div>
<div class="b" style="left:454px;top:652px;width:408px;height:19px;border-top:1px solid #a0a0a0;border-left:1px solid #a0a0a0;border-right:1px solid #fafafa;border-bottom:1px solid #fafafa"></div>
<div class="t" style="left:457px;top:655px;">stopped</div></body></html>
